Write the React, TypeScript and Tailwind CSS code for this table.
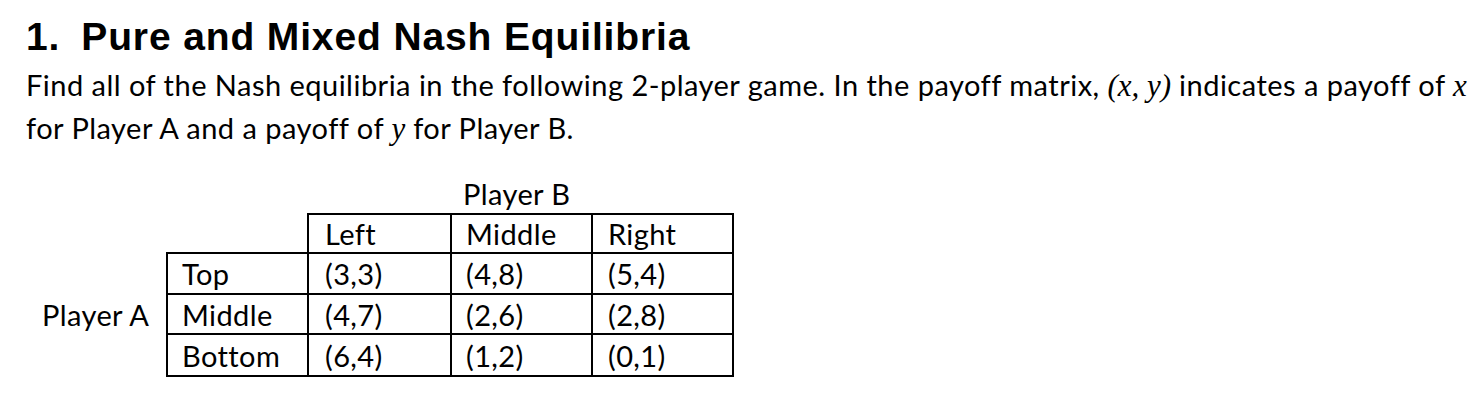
import React from 'react';

const rows = [
    { label: 'Top', h: 'h-[41px]', cells: ['(3,3)', '(4,8)', '(5,4)'] },
    { label: 'Middle', h: 'h-[40px]', cells: ['(4,7)', '(2,6)', '(2,8)'] },
    { label: 'Bottom', h: 'h-[42px]', cells: ['(6,4)', '(1,2)', '(0,1)'] },
];

const Mi: React.FC<{ children: React.ReactNode }> = ({ children }) => (
    <span className="italic font-['Liberation_Serif',serif] text-[31px] tracking-normal">{children}</span>
);

const App: React.FC = () => {
    return (
        <div className="w-[1482px] h-[407px] bg-white text-black overflow-hidden pl-[26px] pt-[14px]">
            <h1 className="font-['Liberation_Sans',Arial,sans-serif] font-bold text-[39px] leading-[46px] tracking-[0.87px] whitespace-nowrap">
                1.<span className="inline-block w-[21px]" />Pure and Mixed Nash Equilibria
            </h1>
            <p className="mt-[4px] font-['Lato',sans-serif] text-[29px] tracking-[0.48px] leading-[42px] whitespace-nowrap">
                Find all of the Nash equilibria in the following 2-player game. In the payoff matrix, <Mi>(x, y)</Mi> indicates a payoff of <Mi>x</Mi>
                <br />
                for Player A and a payoff of <Mi>y</Mi> for Player B.
            </p>

            <table className="mt-[24px] border-collapse font-['Lato',sans-serif] text-[29px] tracking-[0.4px] leading-none">
                <tbody>
                    <tr className="h-[40px]">
                        <td className="w-[141px] p-0" />
                        <td className="w-[141px] p-0" />
                        <td className="w-[143px] p-0" />
                        <td className="w-[141px] pl-[12px] align-middle whitespace-nowrap">Player B</td>
                        <td className="w-[141px] p-0" />
                    </tr>
                    <tr className="h-[39px]">
                        <td className="p-0" />
                        <td className="p-0" />
                        <td className="border-2 border-black pl-[16px]">Left</td>
                        <td className="border-2 border-black pl-[14px]">Middle</td>
                        <td className="border-2 border-black pl-[15px]">Right</td>
                    </tr>
                    {rows.map((r, i) => (
                        <tr key={r.label} className={r.h}>
                            <td className="pl-[16px] whitespace-nowrap">{i === 1 ? 'Player A' : ''}</td>
                            <td className="border-2 border-black pl-[14px]">{r.label}</td>
                            {r.cells.map((c, j) => (
                                <td key={j} className={`border-2 border-black ${j === 0 ? 'pl-[16px]' : j === 1 ? 'pl-[14px]' : 'pl-[15px]'}`}>
                                    {c}
                                </td>
                            ))}
                        </tr>
                    ))}
                </tbody>
            </table>
        </div>
    );
};

export default App;
